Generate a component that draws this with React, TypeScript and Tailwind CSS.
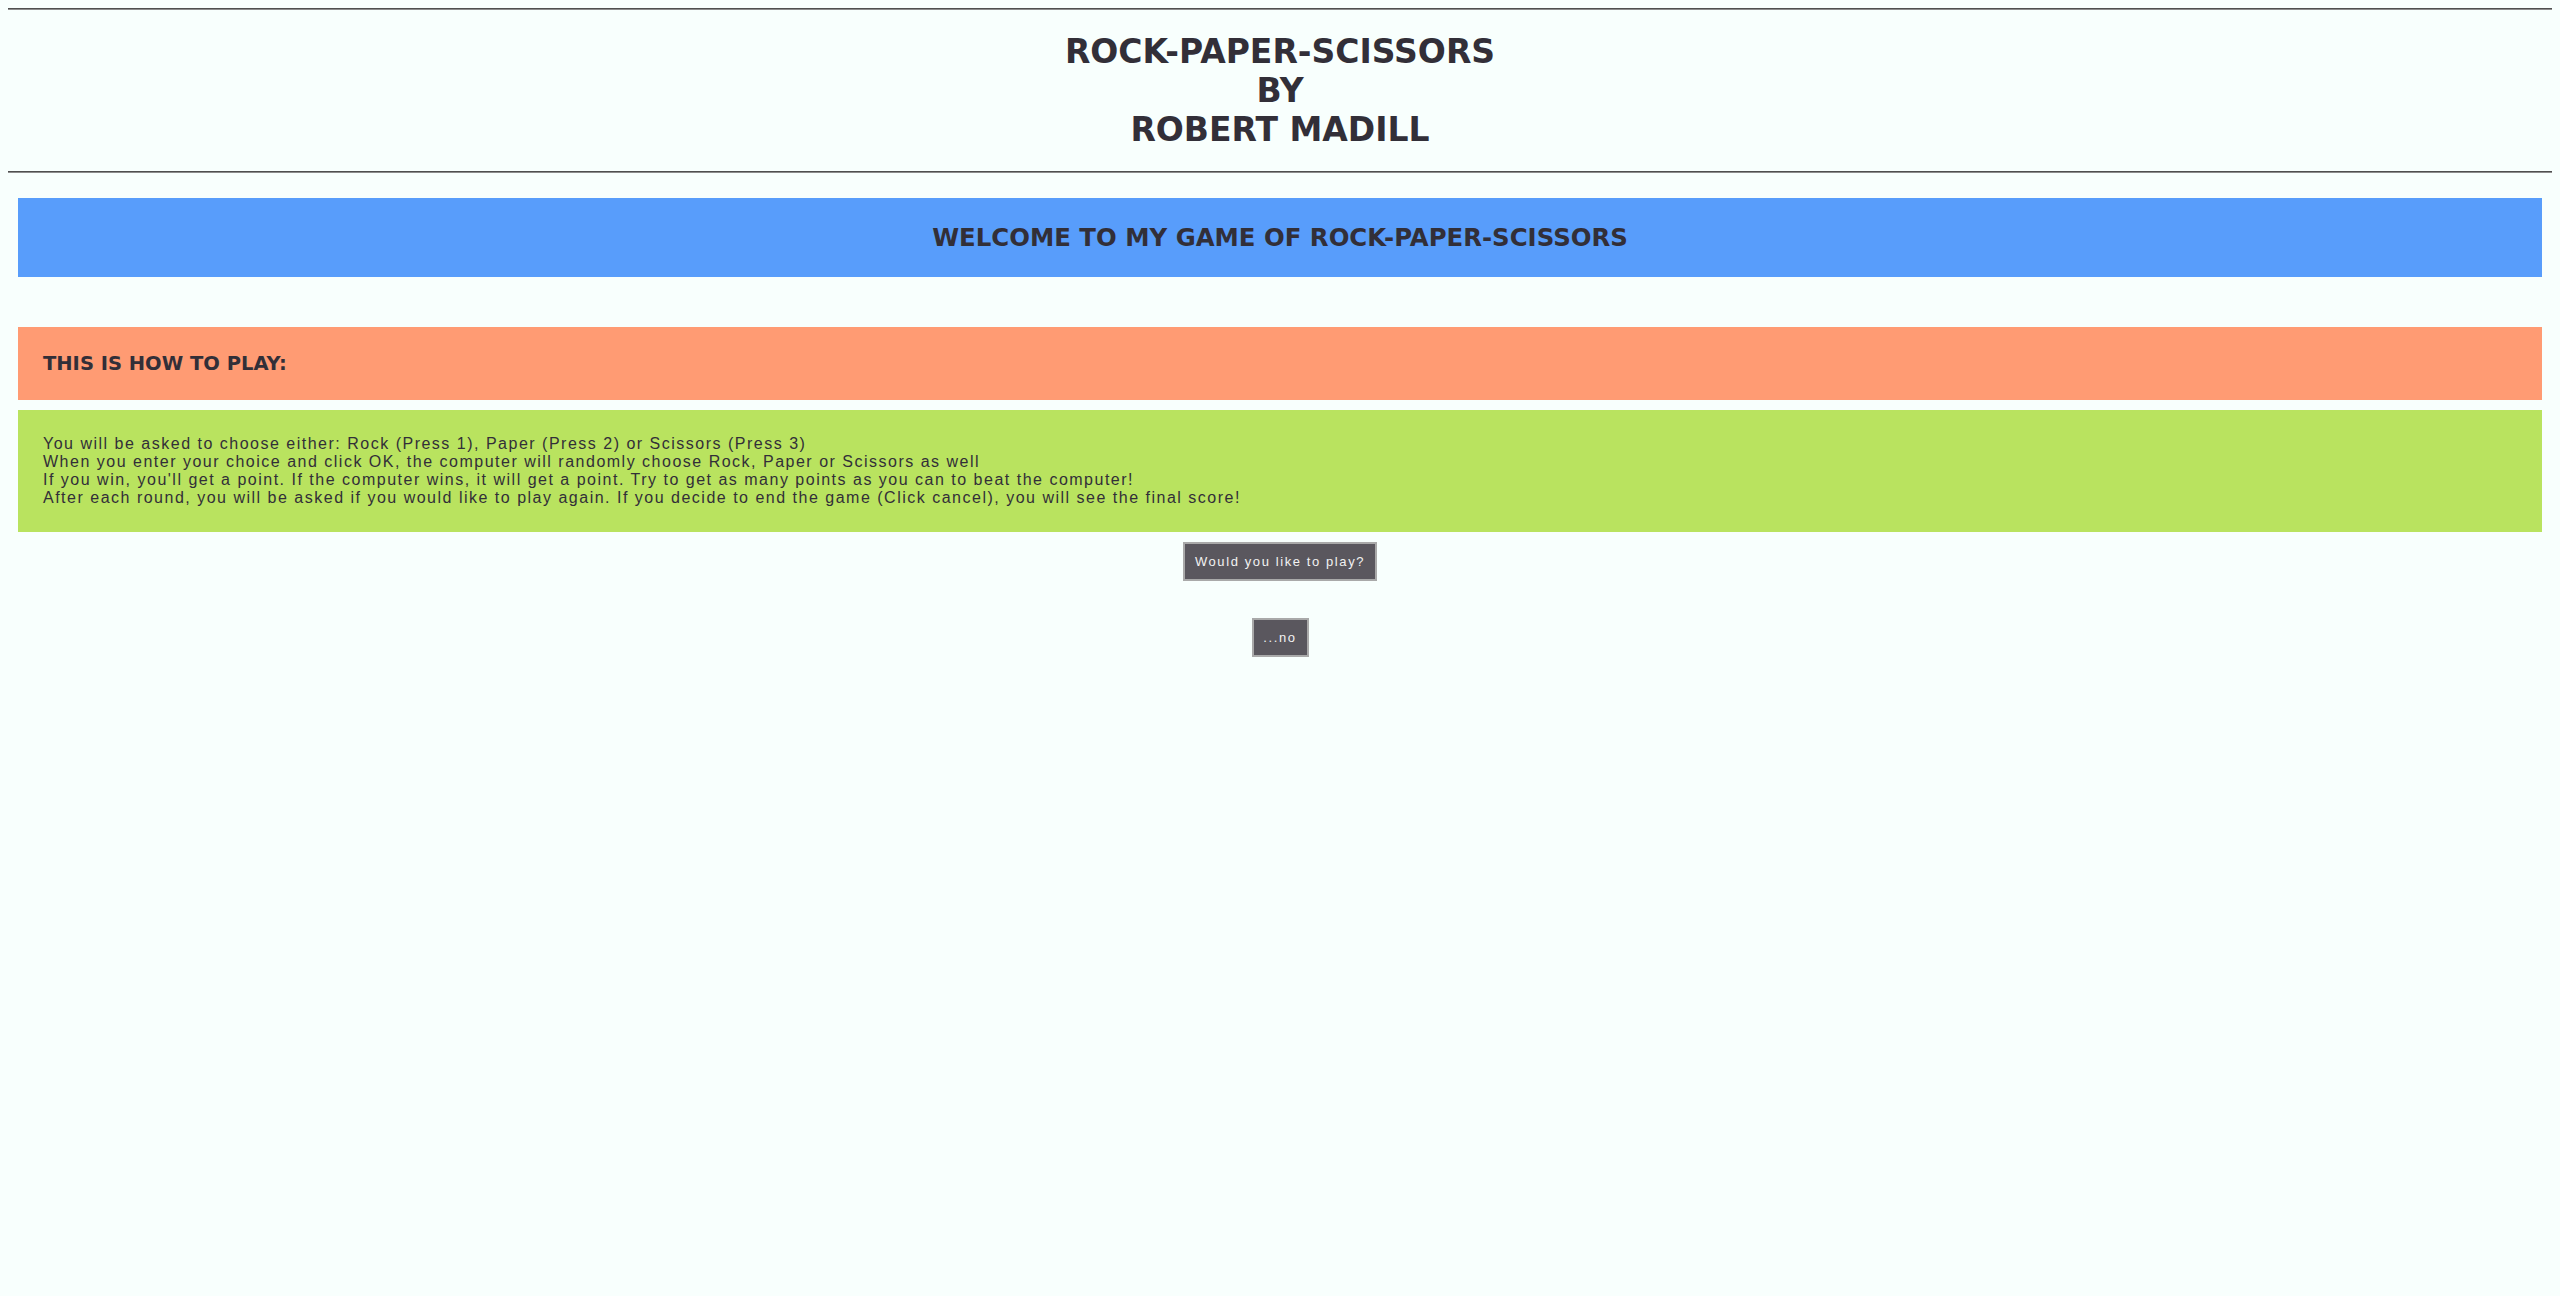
export default function App() {
  const head = { fontFamily: 'Verdana, "DejaVu Sans", sans-serif' };
  const body = { fontFamily: '"Liberation Sans", Arial, sans-serif' };
  return (
    <div className="min-h-screen w-full bg-[#f8fffd] px-[8px] pt-[8px] text-[#322f38]">
      <div className="h-[2px] border-t border-b border-t-[#4f4f4f] border-b-[#8c8c8c]" />
      <h1
        style={head}
        className="my-[22px] text-center text-[33px] font-bold leading-[39px] text-[#322f38]"
      >
        ROCK-PAPER-SCISSORS
        <br />
        BY
        <br />
        ROBERT MADILL
      </h1>
      <div className="h-[2px] border-t border-b border-t-[#4f4f4f] border-b-[#8c8c8c]" />

      <div className="mx-[10px] mt-[25px] flex h-[79px] items-center justify-center bg-[#589dfb]">
        <h2 style={head} className="text-[24.4px] font-bold leading-[29px]">
          WELCOME TO MY GAME OF ROCK-PAPER-SCISSORS
        </h2>
      </div>

      <div className="mx-[10px] mt-[50px] flex h-[73px] items-center bg-[#ff9b73] pl-[25px]">
        <h3 style={head} className="text-[19.5px] font-bold leading-[23px]">
          THIS IS HOW TO PLAY:
        </h3>
      </div>

      <div
        style={body}
        className="mx-[10px] mt-[10px] flex h-[122px] flex-col justify-center bg-[#b9e35f] pl-[25px] text-[16px] leading-[18px] tracking-[1.5px] text-[#322f38]"
      >
        <p>You will be asked to choose either: Rock (Press 1), Paper (Press 2) or Scissors (Press 3)</p>
        <p>When you enter your choice and click OK, the computer will randomly choose Rock, Paper or Scissors as well</p>
        <p>If you win, you'll get a point. If the computer wins, it will get a point. Try to get as many points as you can to beat the computer!</p>
        <p>After each round, you will be asked if you would like to play again. If you decide to end the game (Click cancel), you will see the final score!</p>
      </div>

      <div className="mt-[10px] flex flex-col items-center">
        <button
          style={body}
          className="flex h-[39px] w-[194px] items-center justify-center border-2 border-[#a9a9a9] bg-[#5a575e] text-[13px] tracking-[1.6px] text-[#f2f2f2]"
        >
          Would you like to play?
        </button>
        <button
          style={body}
          className="mt-[37px] flex h-[39px] w-[57px] items-center justify-center border-2 border-[#a9a9a9] bg-[#5a575e] text-[13px] tracking-[1.6px] text-[#f2f2f2]"
        >
          ...no
        </button>
      </div>
    </div>
  );
}
